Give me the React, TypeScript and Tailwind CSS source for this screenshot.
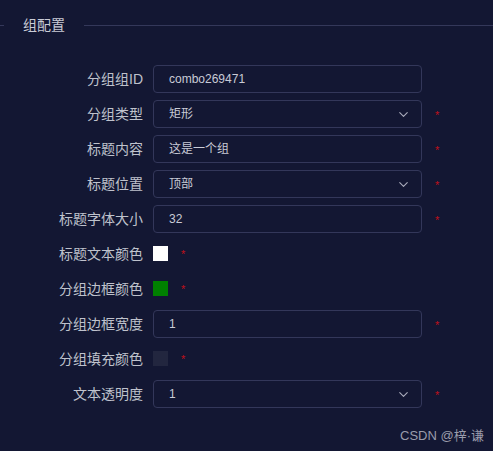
import { ChevronDown } from 'lucide-react'

type Row =
  | { label: string; kind: 'input'; value: string; required?: boolean }
  | { label: string; kind: 'select'; value: string; required?: boolean }
  | { label: string; kind: 'color'; color: string; required?: boolean }

const rows: Row[] = [
  { label: '分组组ID', kind: 'input', value: 'combo269471', required: false },
  { label: '分组类型', kind: 'select', value: '矩形' },
  { label: '标题内容', kind: 'input', value: '这是一个组' },
  { label: '标题位置', kind: 'select', value: '顶部' },
  { label: '标题字体大小', kind: 'input', value: '32' },
  { label: '标题文本颜色', kind: 'color', color: 'bg-white' },
  { label: '分组边框颜色', kind: 'color', color: 'bg-[#008000]' },
  { label: '分组边框宽度', kind: 'input', value: '1' },
  { label: '分组填充颜色', kind: 'color', color: 'bg-[#22263f]' },
  { label: '文本透明度', kind: 'select', value: '1' },
]

function Star() {
  return <span className="text-[#c0101a] text-[11px] leading-none">*</span>
}

export default function App() {
  return (
    <div
      className="relative w-[493px] h-[451px] bg-[#131733] text-[#c5c7d2] overflow-hidden"
      style={{ fontFamily: '"Liberation Sans", "Noto Sans CJK SC", sans-serif' }}
    >
      <div className="flex items-center pt-[17px]">
        <div className="w-[4px] h-px bg-[#34385a]" />
        <span className="px-[19px] text-[14px] leading-[16px] text-[#c9cbd6]">组配置</span>
        <div className="flex-1 h-px bg-[#34385a]" />
      </div>

      <div className="flex flex-col gap-[7px] mt-[32px]">
        {rows.map((r) => (
          <div key={r.label} className="flex items-center h-[28px]">
            <div className="w-[153px] pr-[10px] text-right text-[14px] text-[#bfc2cc]">{r.label}</div>
            {r.kind === 'color' ? (
              <>
                <div className={`w-[15px] h-[15px] -mt-[2px] ${r.color}`} />
                <div className="ml-[13px] -mt-[2px]"><Star /></div>
              </>
            ) : (
              <>
                <div className="w-[269px] h-[28px] rounded-[4px] border border-[#33375a] flex items-center pl-[15px] pr-[10px] text-[12px] text-[#c9cbd6]">
                  <span className="flex-1">{r.value}</span>
                  {r.kind === 'select' && (
                    <ChevronDown className="w-[15px] h-[15px] text-[#a9acbb]" strokeWidth={1.8} />
                  )}
                </div>
                {r.required !== false && <div className="ml-[13px]"><Star /></div>}
              </>
            )}
          </div>
        ))}
      </div>

      <div className="absolute left-[400px] top-[426px] text-[13px] text-[#9a9cab]">CSDN @梓·谦</div>
    </div>
  )
}
